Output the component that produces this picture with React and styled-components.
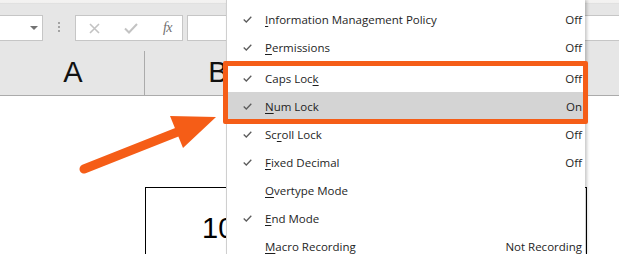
import { createGlobalStyle, styled } from "styled-components";

const GlobalStyle = createGlobalStyle`
  html, body {
    margin: 0;
    padding: 0;
    background: #ffffff;
  }
  body {
    width: 619px;
    height: 254px;
    overflow: hidden;
    font-family: "Open Sans", "Noto Sans", sans-serif;
  }
`;

const items = [
  { label: "Information Management Policy", key: 0, value: "Off", checked: true },
  { label: "Permissions", key: 0, value: "Off", checked: true },
  { label: "Caps Lock", key: 8, value: "Off", checked: true, gap: true },
  { label: "Num Lock", key: 0, value: "On", checked: true, active: true },
  { label: "Scroll Lock", key: 2, value: "Off", checked: true },
  { label: "Fixed Decimal", key: 0, value: "Off", checked: true },
  { label: "Overtype Mode", key: 0, value: "", checked: false },
  { label: "End Mode", key: 0, value: "", checked: true },
  { label: "Macro Recording", key: 0, value: "Not Recording", checked: false },
];

function App() {
  return (
    <>
      <GlobalStyle />
      <Page>
        <RibbonEdge />
        <FormulaBar>
          <NameBox>
            <Caret />
          </NameBox>
          <Grip>
            <i />
            <i />
            <i />
          </Grip>
          <FxBox>
            <svg width="11" height="11" viewBox="0 0 11 11">
              <path d="M1 1 L10 10 M10 1 L1 10" stroke="#c3c3c3" strokeWidth="1.6" fill="none" />
            </svg>
            <svg width="14" height="11" viewBox="0 0 14 11">
              <path d="M1 5.5 L5 9.5 L13 1" stroke="#c3c3c3" strokeWidth="2" fill="none" />
            </svg>
            <Fx>fx</Fx>
          </FxBox>
          <FormulaInput />
        </FormulaBar>
        <ColumnHeaders>
          <HeaderCell $width={145}>A</HeaderCell>
          <HeaderCell $width={145}>B</HeaderCell>
          <HeaderCell $width={145}>C</HeaderCell>
          <HeaderCell $width={145}>D</HeaderCell>
        </ColumnHeaders>
        <Sheet>
          <CellBox>
            <CellValue>100</CellValue>
          </CellBox>
        </Sheet>

        <Menu>
          {items.map((it) => (
            <MenuRow key={it.label} $active={it.active} $gap={it.gap}>
              <Check>
                {it.checked && (
                  <svg width="9" height="7" viewBox="0 0 9 7">
                    <path d="M0.7 3.6 L3.3 6 L8.3 0.8" stroke="#5c5c5c" strokeWidth="1.3" fill="none" />
                  </svg>
                )}
              </Check>
              <Label>
                {it.label.slice(0, it.key)}
                <u>{it.label[it.key]}</u>
                {it.label.slice(it.key + 1)}
              </Label>
              <Value>{it.value}</Value>
            </MenuRow>
          ))}
        </Menu>

        <Callout />
        <Arrow width="619" height="254" viewBox="0 0 619 254">
          <line x1="84" y1="169" x2="180" y2="131" stroke="#f55d17" strokeWidth="9" strokeLinecap="round" />
          <polygon points="170,116 216,117 183,148" fill="#f55d17" />
        </Arrow>
      </Page>
    </>
  );
}

const Page = styled.div`
  position: relative;
  width: 619px;
  height: 254px;
  overflow: hidden;
  display: flex;
  flex-direction: column;
  background: #ffffff;
`;

const RibbonEdge = styled.div`
  height: 4px;
  flex: none;
  background: linear-gradient(#f3f2f1 0, #f3f2f1 60%, #d9d9d9 100%);
`;

const FormulaBar = styled.div`
  height: 47px;
  flex: none;
  box-sizing: border-box;
  padding-top: 11px;
  display: flex;
  align-items: flex-start;
  background: #e6e6e6;
`;

const NameBox = styled.div`
  position: relative;
  width: 53px;
  height: 26px;
  margin-left: -10px;
  box-sizing: border-box;
  background: #ffffff;
  border: 1px solid #c6c6c6;
  flex: none;
`;

const Caret = styled.span`
  position: absolute;
  left: 39px;
  top: 10px;
  width: 0;
  height: 0;
  border-left: 4px solid transparent;
  border-right: 4px solid transparent;
  border-top: 4px solid #737373;
`;

const Grip = styled.div`
  width: 2px;
  margin: 7px 15px 0 15px;
  display: flex;
  flex-direction: column;
  gap: 2px;
  flex: none;
  i {
    display: block;
    width: 2px;
    height: 2px;
    background: #a3a3a3;
  }
`;

const FxBox = styled.div`
  width: 108px;
  height: 26px;
  box-sizing: border-box;
  background: #ffffff;
  border: 1px solid #c6c6c6;
  display: flex;
  align-items: center;
  padding: 0 10px 0 13px;
  justify-content: space-between;
  flex: none;
`;

const Fx = styled.span`
  font-family: "Liberation Serif", "DejaVu Serif", serif;
  font-style: italic;
  font-size: 14px;
  color: #707070;
  letter-spacing: -0.5px;
`;

const FormulaInput = styled.div`
  flex: 1;
  height: 26px;
  margin-left: 4px;
  margin-right: -10px;
  box-sizing: border-box;
  background: #ffffff;
  border: 1px solid #c6c6c6;
`;

const ColumnHeaders = styled.div`
  height: 44px;
  flex: none;
  display: flex;
  background: #e6e6e6;
  border-bottom: 1px solid #ababab;
`;

const HeaderCell = styled.div`
  width: ${({ $width }) => $width}px;
  flex: none;
  box-sizing: border-box;
  border-right: 1px solid #ababab;
  display: flex;
  align-items: center;
  justify-content: center;
  font-family: "Liberation Sans", Arial, sans-serif;
  font-size: 29px;
  color: #111111;
  padding-bottom: 1px;
  padding-left: 2px;
`;

const Sheet = styled.div`
  flex: 1;
  background: #ffffff;
  padding: 91px 0 0 145px;
`;

const CellBox = styled.div`
  width: 442px;
  height: 200px;
  box-sizing: border-box;
  border: 1px solid #000000;
  padding: 26px 0 0 56px;
`;

const CellValue = styled.div`
  font-family: "Liberation Sans", Arial, sans-serif;
  font-size: 29px;
  line-height: 29px;
  color: #000000;
`;

const Menu = styled.div`
  position: absolute;
  left: 226px;
  top: 0;
  width: 359px;
  height: 254px;
  box-sizing: border-box;
  padding-top: 5px;
  background: #ffffff;
  border-left: 1px solid #cfcfcf;
  box-shadow: 2px 0 3px rgba(0, 0, 0, 0.22);
`;

const MenuRow = styled.div`
  height: 28px;
  margin-top: ${({ $gap }) => ($gap ? 3 : 0)}px;
  display: flex;
  align-items: center;
  padding-right: 3px;
  background: ${({ $active }) => ($active ? "#d4d4d4" : "transparent")};
  font-size: 11.5px;
  color: #1e1e1e;
`;

const Check = styled.span`
  width: 38px;
  flex: none;
  display: flex;
  justify-content: flex-start;
  padding-left: 16px;
  box-sizing: border-box;
`;

const Label = styled.span`
  flex: 1;
  white-space: nowrap;
  u {
    text-decoration-thickness: 1px;
    text-underline-offset: 2px;
  }
`;

const Value = styled.span`
  white-space: nowrap;
`;

const Callout = styled.div`
  position: absolute;
  left: 223px;
  top: 61px;
  width: 365px;
  height: 63px;
  box-sizing: border-box;
  border: 5px solid #f55d17;
  border-radius: 2px;
  pointer-events: none;
`;

const Arrow = styled.svg`
  position: absolute;
  left: 0;
  top: 0;
  pointer-events: none;
`;

export default App;
